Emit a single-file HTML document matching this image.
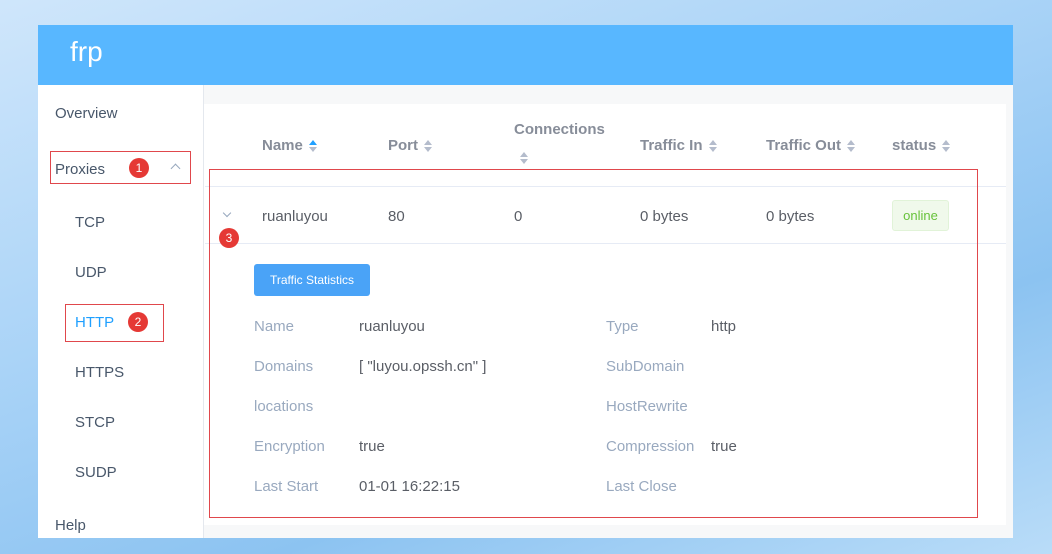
<!DOCTYPE html>
<html><head><style>
*{margin:0;padding:0;box-sizing:border-box}
body{width:1052px;height:554px;overflow:hidden;position:relative;font-family:"Liberation Sans",sans-serif;background:linear-gradient(160deg,#cfe6fb 0%,#a9d3f7 40%,#8cc3f1 70%,#b9dcf8 100%)}
.a{position:absolute;white-space:nowrap}
.panel{position:absolute;left:38px;top:25px;width:975px;height:513px;background:#fff}
.hdr{position:absolute;left:38px;top:25px;width:975px;height:60px;background:#58b7ff}
.side{font-size:15px;color:#48576a;margin-top:1px}
.th{font-size:15px;font-weight:bold;color:#878d99;margin-top:1px}
.td{font-size:15px;color:#5a5e66;margin-top:1px}
.lb{font-size:15px;color:#99a9bf;margin-top:1px}
.vl{font-size:15px;color:#5a5e66;margin-top:1px}
.sort{display:inline-block;vertical-align:middle;margin-left:6px;width:8px;height:12px;position:relative}
.sort:before{content:"";position:absolute;left:0;top:0;border:4px solid transparent;border-bottom:5px solid #b4bccc;border-top:0}
.sort:after{content:"";position:absolute;left:0;bottom:0;border:4px solid transparent;border-top:5px solid #b4bccc;border-bottom:0}
.sort.on:before{border-bottom-color:#20a0ff}
.badge{position:absolute;width:20px;height:20px;border-radius:50%;background:#e53935;color:#fff;font-size:12px;text-align:center;line-height:20px}
.box{position:absolute;border:1px solid #e0474c}
</style></head><body>
<div class="panel"></div>
<div class="hdr"></div>
<div class="a" style="left:70px;top:36px;font-size:28px;color:#fff">frp</div>
<div class="a" style="left:203px;top:85px;width:1px;height:453px;background:#e4e8ee"></div>
<div class="a" style="left:204px;top:85px;width:809px;height:19px;background:#f7f8f9"></div>
<div class="a" style="left:1006px;top:85px;width:7px;height:453px;background:#f7f8f9"></div>
<div class="a" style="left:204px;top:525px;width:809px;height:13px;background:#f7f8f9"></div>

<div class="a side" style="left:55px;top:104px">Overview</div>
<div class="a side" style="left:55px;top:160px">Proxies</div>
<div class="box" style="left:50px;top:151px;width:141px;height:33px"></div>
<div class="badge" style="left:129px;top:158px">1</div>
<div class="a" style="left:172px;top:165px;width:7px;height:7px;border-left:1px solid #97a8be;border-top:1px solid #97a8be;transform:rotate(45deg)"></div>
<div class="a side" style="left:75px;top:213px">TCP</div>
<div class="a side" style="left:75px;top:263px">UDP</div>
<div class="a side" style="left:75px;top:313px;color:#20a0ff">HTTP</div>
<div class="box" style="left:65px;top:304px;width:99px;height:38px"></div>
<div class="badge" style="left:128px;top:312px">2</div>
<div class="a side" style="left:75px;top:363px">HTTPS</div>
<div class="a side" style="left:75px;top:413px">STCP</div>
<div class="a side" style="left:75px;top:463px">SUDP</div>
<div class="a side" style="left:55px;top:516px">Help</div>

<div class="a th" style="left:262px;top:136px">Name<span class="sort on"></span></div>
<div class="a th" style="left:388px;top:136px">Port<span class="sort"></span></div>
<div class="a th" style="left:514px;top:120px">Connections</div>
<div class="a th" style="left:520px;top:148px"><span class="sort" style="margin-left:0"></span></div>
<div class="a th" style="left:640px;top:136px">Traffic In<span class="sort"></span></div>
<div class="a th" style="left:766px;top:136px">Traffic Out<span class="sort"></span></div>
<div class="a th" style="left:892px;top:136px">status<span class="sort"></span></div>
<div class="a" style="left:205px;top:186px;width:801px;height:1px;background:#e6ebf5"></div>
<div class="a" style="left:205px;top:243px;width:801px;height:1px;background:#e6ebf5"></div>

<div class="a" style="left:224px;top:210px;width:6px;height:6px;border-right:1px solid #97a8be;border-bottom:1px solid #97a8be;transform:rotate(45deg)"></div>
<div class="a td" style="left:262px;top:207px">ruanluyou</div>
<div class="a td" style="left:388px;top:207px">80</div>
<div class="a td" style="left:514px;top:207px">0</div>
<div class="a td" style="left:640px;top:207px">0 bytes</div>
<div class="a td" style="left:766px;top:207px">0 bytes</div>
<div class="a" style="left:892px;top:200px;width:57px;height:31px;background:#f0f9eb;border:1px solid #e1f3d8;border-radius:3px;color:#67c23a;font-size:13px;text-align:center;line-height:29px">online</div>
<div class="box" style="left:209px;top:169px;width:769px;height:349px"></div>
<div class="badge" style="left:219px;top:228px">3</div>

<div class="a" style="left:254px;top:264px;width:116px;height:32px;background:#4aa3f7;border-radius:3px;color:#fff;font-size:12px;text-align:center;line-height:32px">Traffic Statistics</div>
<div class="a lb" style="left:254px;top:317px">Name</div><div class="a vl" style="left:359px;top:317px">ruanluyou</div>
<div class="a lb" style="left:606px;top:317px">Type</div><div class="a vl" style="left:711px;top:317px">http</div>
<div class="a lb" style="left:254px;top:357px">Domains</div><div class="a vl" style="left:359px;top:357px">[ "luyou.opssh.cn" ]</div>
<div class="a lb" style="left:606px;top:357px">SubDomain</div>
<div class="a lb" style="left:254px;top:397px">locations</div>
<div class="a lb" style="left:606px;top:397px">HostRewrite</div>
<div class="a lb" style="left:254px;top:437px">Encryption</div><div class="a vl" style="left:359px;top:437px">true</div>
<div class="a lb" style="left:606px;top:437px">Compression</div><div class="a vl" style="left:711px;top:437px">true</div>
<div class="a lb" style="left:254px;top:477px">Last Start</div><div class="a vl" style="left:359px;top:477px">01-01 16:22:15</div>
<div class="a lb" style="left:606px;top:477px">Last Close</div>
</body></html>
